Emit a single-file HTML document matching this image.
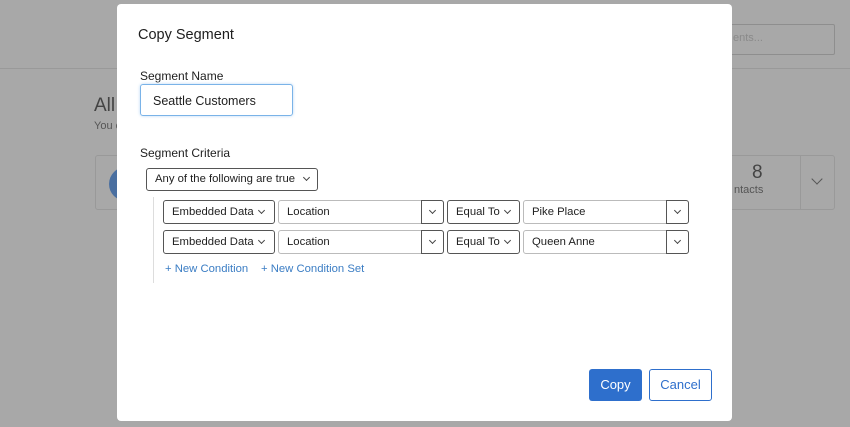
<!DOCTYPE html>
<html><head><style>
*{box-sizing:border-box;margin:0;padding:0}
body{width:850px;height:427px;overflow:hidden;background:#a8a8a8;font-family:"Liberation Sans",sans-serif;position:relative;color:#1e1e1e}
.a{position:absolute}
.box{position:absolute;border:1px solid #555;border-radius:3px;background:#fff;font-size:11.3px;line-height:22px;padding-left:8px;white-space:nowrap}
.lt{border-color:#bbb}
.chev{position:absolute;width:5px;height:5px;border-right:1.1px solid #444;border-bottom:1.1px solid #444;transform:rotate(45deg)}
.ab{position:absolute;top:-1px;right:-1px;width:23px;bottom:-1px;border:1px solid #555;border-radius:0 3px 3px 0;background:#fff}
</style></head><body>
<div class="a" style="left:0;top:68px;width:850px;height:1px;background:#999"></div>
<div class="a" style="left:728px;top:24px;width:107px;height:31px;border:1px solid #8e8e8e;border-radius:2px"></div>
<div class="a" style="left:733px;top:32px;font-size:11px;color:#8a8a8a">ents...</div>
<div class="a" style="left:94px;top:95px;font-size:19px;color:#444">All</div>
<div class="a" style="left:94px;top:120px;font-size:11px;color:#555">You c</div>
<div class="a" style="left:95px;top:155px;width:740px;height:55px;border:1px solid #999;border-radius:3px"></div>
<div class="a" style="left:109px;top:167px;width:34px;height:34px;border-radius:50%;background:#4a6fa0"></div>
<div class="a" style="left:800px;top:155px;width:1px;height:55px;background:#999"></div>
<div class="a" style="left:752px;top:162px;font-size:19px;color:#444">8</div>
<div class="a" style="left:734px;top:184px;font-size:11px;color:#555">ntacts</div>
<div class="chev" style="left:813px;top:175px;width:8px;height:8px;border-color:#555"></div>

<div class="a" style="left:117px;top:4px;width:615px;height:417px;background:#fff;border-radius:4px"></div>
<div class="a" style="left:138px;top:27px;font-size:14.5px">Copy Segment</div>
<div class="a" style="left:140px;top:69px;font-size:12px">Segment Name</div>
<div class="a" style="left:140px;top:84px;width:153px;height:32px;border:1px solid #7ab3e8;border-radius:3px;box-shadow:0 0 3px #bcd8f4;font-size:12.5px;padding:9px 0 0 12px">Seattle Customers</div>
<div class="a" style="left:140px;top:146px;font-size:12px">Segment Criteria</div>
<div class="box" style="left:146px;top:168px;width:172px;height:23px;line-height:21px">Any of the following are true<div class="chev" style="left:157px;top:6px"></div></div>
<div class="a" style="left:153px;top:197px;width:1px;height:86px;background:#ddd"></div>

<div class="box" style="left:163px;top:200px;width:112px;height:24px">Embedded Data<div class="chev" style="left:95px;top:7px"></div></div>
<div class="box lt" style="left:278px;top:200px;width:166px;height:24px">Location<div class="ab"><div class="chev" style="left:8px;top:7px"></div></div></div>
<div class="box" style="left:447px;top:200px;width:73px;height:24px">Equal To<div class="chev" style="left:57px;top:7px"></div></div>
<div class="box lt" style="left:523px;top:200px;width:166px;height:24px">Pike Place<div class="ab"><div class="chev" style="left:8px;top:7px"></div></div></div>

<div class="box" style="left:163px;top:230px;width:112px;height:24px">Embedded Data<div class="chev" style="left:95px;top:7px"></div></div>
<div class="box lt" style="left:278px;top:230px;width:166px;height:24px">Location<div class="ab"><div class="chev" style="left:8px;top:7px"></div></div></div>
<div class="box" style="left:447px;top:230px;width:73px;height:24px">Equal To<div class="chev" style="left:57px;top:7px"></div></div>
<div class="box lt" style="left:523px;top:230px;width:166px;height:24px">Queen Anne<div class="ab"><div class="chev" style="left:8px;top:7px"></div></div></div>

<div class="a" style="left:165px;top:263px;font-size:11.3px;color:#3b7dc4">+ New Condition</div>
<div class="a" style="left:261px;top:263px;font-size:11.3px;color:#3b7dc4">+ New Condition Set</div>

<div class="a" style="left:589px;top:369px;width:53px;height:32px;background:#2e6fcc;border-radius:3px;color:#fff;font-size:13px;text-align:center;line-height:32px">Copy</div>
<div class="a" style="left:649px;top:369px;width:63px;height:32px;border:1px solid #2e6fcc;border-radius:3px;color:#2e6fcc;font-size:13px;text-align:center;line-height:30px">Cancel</div>
</body></html>
